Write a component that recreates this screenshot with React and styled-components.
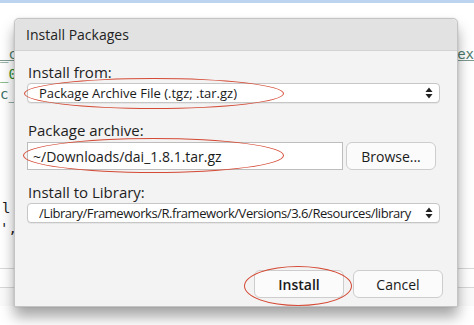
import React from 'react';
import styled, { createGlobalStyle } from 'styled-components';

const GlobalStyle = createGlobalStyle`
  html, body { margin: 0; padding: 0; background: #fff; }
  body { font-family: "Open Sans", "Noto Sans", sans-serif; }
`;

const Stage = styled.div`
  position: relative;
  width: 474px;
  height: 325px;
  overflow: hidden;
  background: #fff;
  border-top: 3px solid #bcd4ef;
  box-sizing: border-box;
`;

const Editor = styled.div`
  display: flex;
  flex-direction: column;
  font-family: "DejaVu Sans Mono", monospace;
  font-size: 14px;
  line-height: 20px;
  padding-top: 41px;
`;

const CodeLine = styled.div`
  height: ${p => p.h || 20}px;
  display: flex;
  justify-content: space-between;
  color: ${p => p.color || '#1a1a1a'};
  white-space: pre;
`;

const Frag = styled.span`
  color: ${p => p.color || 'inherit'};
  text-decoration: ${p => (p.under ? 'underline' : 'none')};
  text-decoration-color: #7d9a8f;
  margin-left: ${p => p.shift || 0}px;
`;

const PaneRule = styled.div`
  border-top: 1px solid #d8d8d8;
  height: 18px;
  background: ${p => p.bg || 'transparent'};
`;

const Dialog = styled.div`
  position: absolute;
  left: 14px;
  top: 15px;
  width: 444px;
  height: 289px;
  display: flex;
  flex-direction: column;
  background: #f3f3f3;
  border: 1px solid #c4c4c4;
  border-radius: 5px 5px 0 0;
  box-shadow: 0 10px 14px rgba(0, 0, 0, 0.35), 0 0 2px rgba(0, 0, 0, 0.15);
  box-sizing: border-box;
`;

const TitleBar = styled.div`
  height: 31px;
  flex: none;
  display: flex;
  align-items: center;
  padding-left: 11px;
  background: #e2e2e2;
  border-bottom: 1px solid #d2d2d2;
  border-radius: 5px 5px 0 0;
  font-size: 14px;
  color: #222;
`;

const Body = styled.div`
  flex: 1;
  display: flex;
  flex-direction: column;
  padding: 11px 14px 8px 12px;
`;

const Label = styled.div`
  font-size: 15px;
  line-height: 20px;
  color: #1e1e1e;
  padding-left: 1px;
  margin-top: ${p => p.mt || 0}px;
  margin-bottom: 1px;
`;

const Select = styled.div`
  height: 20px;
  width: 413px;
  box-sizing: border-box;
  display: flex;
  align-items: center;
  justify-content: space-between;
  padding: 0 6px 0 11px;
  background: #fff;
  border: 1px solid #c6c6c6;
  border-radius: 4px;
  box-shadow: 0 1px 0 rgba(0, 0, 0, 0.05);
  font-size: 13px;
  letter-spacing: ${p => p.tight || 0}px;
  color: #1a1a1a;
  white-space: nowrap;
  overflow: hidden;
`;

const Row = styled.div`
  display: flex;
  align-items: center;
  gap: 3px;
  margin-top: 1px;
`;

const Input = styled.div`
  width: 316px;
  height: 28px;
  box-sizing: border-box;
  display: flex;
  align-items: center;
  padding-left: 5px;
  background: #fff;
  border: 1px solid #bdbdbd;
  font-size: 14px;
  color: #1a1a1a;
`;

const Button = styled.div`
  width: ${p => p.w || 90}px;
  height: 28px;
  box-sizing: border-box;
  display: flex;
  align-items: center;
  justify-content: center;
  background: #fbfbfb;
  border: 1px solid #cdcdcd;
  border-radius: 6px;
  font-size: 14px;
  color: #1a1a1a;
  font-weight: ${p => (p.primary ? 600 : 400)};
`;

const Footer = styled.div`
  margin-top: auto;
  display: flex;
  justify-content: flex-end;
  gap: 9px;
`;

const Mark = styled.div`
  position: absolute;
  left: ${p => p.x}px;
  top: ${p => p.y}px;
  width: ${p => p.w}px;
  height: ${p => p.h}px;
  border: 1.5px solid #d44a35;
  border-radius: 50%;
  box-sizing: border-box;
  pointer-events: none;
`;

const Updown = () => (
  <svg width="8" height="12" viewBox="0 0 8 12" style={{ flex: 'none' }}>
    <path d="M4 0.5 L7.5 5 H0.5 Z" fill="#222" />
    <path d="M4 11.5 L7.5 7 H0.5 Z" fill="#222" />
  </svg>
);

export default function App() {
  return (
    <>
      <GlobalStyle />
      <Stage>
        <Editor>
          <CodeLine>
            <Frag color="#4d7a6a" under>_c</Frag>
            <Frag color="#4d7a6a" under>_ex</Frag>
          </CodeLine>
          <CodeLine><Frag color="#2e8b2e">_0</Frag></CodeLine>
          <CodeLine><Frag color="#3c6f66">c_</Frag></CodeLine>
          <CodeLine h={94} />
          <CodeLine><Frag shift={2}>l</Frag></CodeLine>
          <CodeLine h={50}><Frag>',</Frag></CodeLine>
          <PaneRule />
          <PaneRule bg="#fafafa" />
        </Editor>

        <Dialog>
          <TitleBar>Install Packages</TitleBar>
          <Body>
            <Label>Install from:</Label>
            <Select>
              <span>Package Archive File (.tgz; .tar.gz)</span>
              <Updown />
            </Select>
            <Label mt={17}>Package archive:</Label>
            <Row>
              <Input>~/Downloads/dai_1.8.1.tar.gz</Input>
              <Button>Browse...</Button>
            </Row>
            <Label mt={12}>Install to Library:</Label>
            <Select tight={-0.45}>
              <span>/Library/Frameworks/R.framework/Versions/3.6/Resources/library</span>
              <Updown />
            </Select>
            <Footer>
              <Button primary>Install</Button>
              <Button>Cancel</Button>
            </Footer>
          </Body>
          <Mark x={9} y={59} w={260} h={31} />
          <Mark x={8} y={119} w={261} h={35} />
          <Mark x={229} y={247} w={108} h={40} />
        </Dialog>
      </Stage>
    </>
  );
}
